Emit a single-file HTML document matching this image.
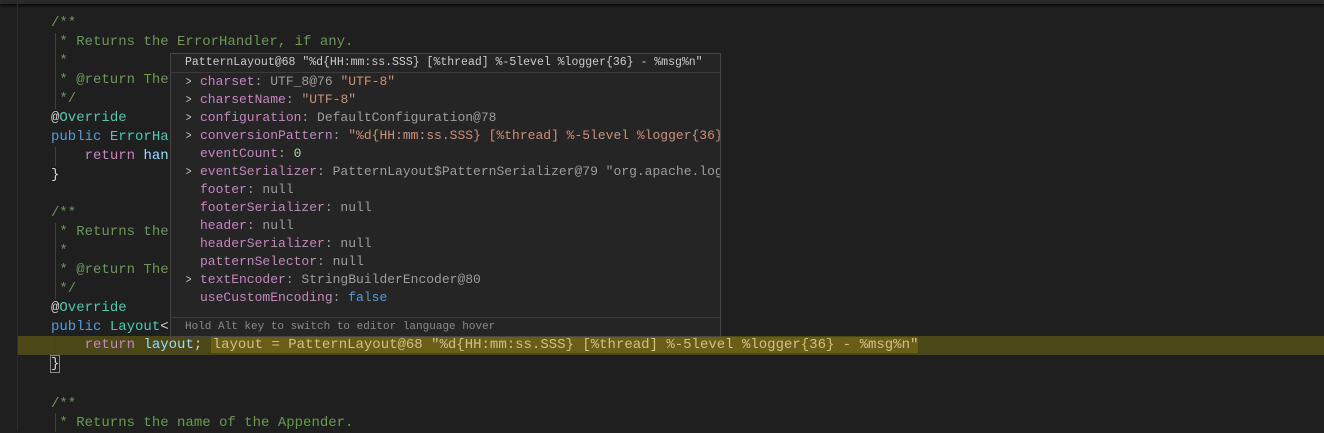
<!DOCTYPE html>
<html><head><meta charset="utf-8"><style>
body{margin:0;width:1324px;height:430px;background:#1f1f1f;overflow:hidden;position:relative;font-family:"Liberation Mono","DejaVu Sans Mono",monospace}
.top{position:absolute;left:0;top:0;width:1324px;height:4px;background:#2a2a2a;box-shadow:0 1px 3px #000}
.gut{position:absolute;left:17px;top:4px;width:1px;height:426px;background:#2c2c2c}
.cur{position:absolute;left:18px;top:336px;width:1306px;height:19px;background:#4b4717}
.l{position:absolute;left:51px;font-size:14px;line-height:19px;height:19px;white-space:pre;color:#d4d4d4;margin-top:2px}
.c{color:#6a9955}.k{color:#c586c0}.b{color:#569cd6}.t{color:#4ec9b0}.v{color:#9cdcfe}
.ind{position:absolute;width:1px;background:#404040}
.hov{position:absolute;left:170px;top:53px;width:549px;height:282px;background:#252526;border:1px solid #454545;overflow:hidden}
.hh{height:18px;line-height:18px;font-size:11.5px;color:#cccccc;padding-left:14px;white-space:pre;border-bottom:1px solid #3a3a3a}
.r{height:18px;line-height:18px;font-size:13px;white-space:pre;padding-left:29px;position:relative;color:#9d9d9d}
.r .n{color:#c586c0}.r .s{color:#ce9178}.r .num{color:#b5cea8}.r .f{color:#569cd6}
.ch{position:absolute;left:14px;top:0;color:#cccccc;font-size:12px;transform:scaleX(.8)}
.ft{position:absolute;left:0;top:263px;width:549px;height:19px;border-top:1px solid #3a3a3a;font-size:11px;line-height:19px;color:#8a8a8a;padding-left:14px;white-space:pre}
.inl{background:#6a5d16;color:#cdc28a;padding-left:2px}
</style></head><body>
<div class="top"></div>
<div class="gut"></div>
<div class="cur"></div>
<div class="ind" style="left:55px;top:33px;height:76px"></div>
<div class="ind" style="left:55px;top:147px;height:19px"></div>
<div class="ind" style="left:55px;top:223px;height:76px"></div>
<div class="ind" style="left:55px;top:336px;height:19px"></div>
<div class="ind" style="left:55px;top:413px;height:19px"></div>
<div class="l c" style="top:12px">/**</div>
<div class="l c" style="top:31px"> * Returns the ErrorHandler, if any.</div>
<div class="l c" style="top:50px"> *</div>
<div class="l c" style="top:69px"> * @return The</div>
<div class="l c" style="top:88px"> */</div>
<div class="l" style="top:107px"><span style="color:#d4d4d4">@</span><span class="t">Override</span></div>
<div class="l" style="top:126px"><span class="b">public</span> <span class="t">ErrorHa</span></div>
<div class="l" style="top:145px">    <span class="k">return</span> <span class="v">han</span></div>
<div class="l" style="top:164px">}</div>
<div class="l c" style="top:202px">/**</div>
<div class="l c" style="top:221px"> * Returns the</div>
<div class="l c" style="top:240px"> *</div>
<div class="l c" style="top:259px"> * @return The</div>
<div class="l c" style="top:278px"> */</div>
<div class="l" style="top:297px"><span style="color:#d4d4d4">@</span><span class="t">Override</span></div>
<div class="l" style="top:316px"><span class="b">public</span> <span class="t">Layout</span>&lt;</div>
<div class="l" style="top:334px">    <span class="k">return</span> <span class="v">layout</span>; <span class="inl">layout = PatternLayout@68 "%d{HH:mm:ss.SSS} [%thread] %-5level %logger{36} - %msg%n"</span></div>
<div class="l" style="top:353px"><span style="outline:1px solid #888">}</span></div>
<div class="l c" style="top:393px">/**</div>
<div class="l c" style="top:412px"> * Returns the name of the Appender.</div>
<div class="hov">
<div class="hh">PatternLayout@68 "%d{HH:mm:ss.SSS} [%thread] %-5level %logger{36} - %msg%n"</div>
<div class="r"><span class="ch">&gt;</span><span class="n">charset</span>: UTF_8@76 <span class="s">"UTF-8"</span></div>
<div class="r"><span class="ch">&gt;</span><span class="n">charsetName</span>: <span class="s">"UTF-8"</span></div>
<div class="r"><span class="ch">&gt;</span><span class="n">configuration</span>: DefaultConfiguration@78</div>
<div class="r"><span class="ch">&gt;</span><span class="n">conversionPattern</span>: <span class="s">"%d{HH:mm:ss.SSS} [%thread] %-5level %logger{36} - %msg%n"</span></div>
<div class="r"><span class="n">eventCount</span>: <span class="num">0</span></div>
<div class="r"><span class="ch">&gt;</span><span class="n">eventSerializer</span>: PatternLayout$PatternSerializer@79 "org.apache.logging"</div>
<div class="r"><span class="n">footer</span>: null</div>
<div class="r"><span class="n">footerSerializer</span>: null</div>
<div class="r"><span class="n">header</span>: null</div>
<div class="r"><span class="n">headerSerializer</span>: null</div>
<div class="r"><span class="n">patternSelector</span>: null</div>
<div class="r"><span class="ch">&gt;</span><span class="n">textEncoder</span>: StringBuilderEncoder@80</div>
<div class="r"><span class="n">useCustomEncoding</span>: <span class="f">false</span></div>
<div class="ft">Hold Alt key to switch to editor language hover</div>
</div>
</body></html>
